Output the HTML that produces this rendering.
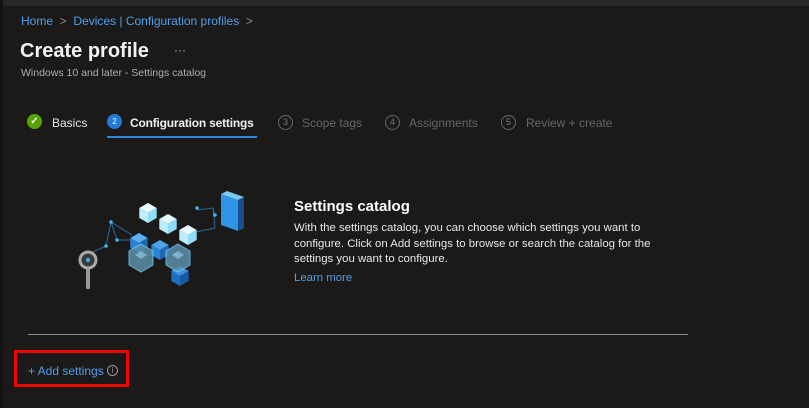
<!DOCTYPE html>
<html><head><meta charset="utf-8"><style>
*{margin:0;padding:0;box-sizing:border-box}
body{width:809px;height:408px;background:#1b1a19;font-family:"Liberation Sans",sans-serif;position:relative;overflow:hidden;color:#fff}
.a{position:absolute;white-space:nowrap}
.blue{color:#4f9fe8}
.step{font-size:12px;color:#666}
.circ{position:absolute;width:15px;height:15px;border-radius:50%;border:1.5px solid #666;font-size:9px;text-align:center;line-height:12px;color:#777}
</style></head><body>
<div class="a" style="left:0;top:0;width:809px;height:6px;background:#292827"></div>
<div class="a" style="left:0;top:0;width:3px;height:408px;background:#141313"></div>
<div class="a" style="left:21px;top:14px;font-size:12px"><span class="blue">Home</span><span style="color:#888">&nbsp;&nbsp;&gt;&nbsp;&nbsp;</span><span class="blue">Devices | Configuration profiles</span><span style="color:#888">&nbsp;&nbsp;&gt;</span></div>
<div class="a" style="left:20px;top:40px;font-size:20px;font-weight:bold;color:#f3f2f1">Create profile</div>
<div class="a" style="left:174px;top:43px;font-size:12px;color:#aaa">···</div>
<div class="a" style="left:21px;top:67px;font-size:10.5px;color:#b0aead">Windows 10 and later - Settings catalog</div>

<div class="a" style="left:27px;top:114px;width:15px;height:15px;border-radius:50%;background:#57a300;color:#fff;font-size:10px;text-align:center;line-height:15px;font-weight:bold">✓</div>
<div class="a" style="left:52px;top:116px;font-size:12px;color:#e6e6e6">Basics</div>
<div class="a" style="left:107px;top:114px;width:15px;height:15px;border-radius:50%;background:#1f7ad6;color:#fff;font-size:8px;text-align:center;line-height:15px">2</div>
<div class="a" style="left:130px;top:116px;font-size:12px;font-weight:bold;color:#f0f0f0;letter-spacing:-0.2px">Configuration settings</div>
<div class="a" style="left:107px;top:136px;width:150px;height:2px;background:#2a88e0"></div>
<div class="circ" style="left:278px;top:115px">3</div>
<div class="a step" style="left:302px;top:116px">Scope tags</div>
<div class="circ" style="left:385px;top:115px">4</div>
<div class="a step" style="left:409px;top:116px">Assignments</div>
<div class="circ" style="left:501px;top:115px">5</div>
<div class="a step" style="left:526px;top:116px">Review + create</div>

<svg class="a" style="left:0;top:0" width="300" height="330" viewBox="0 0 300 330">
<g stroke="#246d9e" stroke-width="1" fill="none">
<polyline points="93,252 106,246 111,222 117,240 137,240"/>
<line x1="111" y1="222" x2="132" y2="235"/>
<polyline points="197,210 213,208 215,228 196,232"/>
<line x1="213" y1="208" x2="215" y2="216"/>
<line x1="180" y1="256" x2="160" y2="248"/>
</g>
<g fill="#3fb8f0"><circle cx="106" cy="246" r="1.8"/><circle cx="111" cy="222" r="1.8"/><circle cx="117" cy="240" r="1.8"/><circle cx="197" cy="208" r="1.8"/><circle cx="215" cy="215" r="1.8"/></g>
<g transform="translate(148,213)"><polygon points="0,-10 8.7,-5 0,0 -8.7,-5" fill="#e6faff"/><polygon points="-8.7,-5 0,0 0,10 -8.7,5" fill="#bdeeff"/><polygon points="8.7,-5 0,0 0,10 8.7,5" fill="#8fdcfb"/></g>
<g transform="translate(168,224)"><polygon points="0,-10 8.7,-5 0,0 -8.7,-5" fill="#e6faff"/><polygon points="-8.7,-5 0,0 0,10 -8.7,5" fill="#bdeeff"/><polygon points="8.7,-5 0,0 0,10 8.7,5" fill="#8fdcfb"/></g>
<g transform="translate(188,235)"><polygon points="0,-10 8.7,-5 0,0 -8.7,-5" fill="#e6faff"/><polygon points="-8.7,-5 0,0 0,10 -8.7,5" fill="#bdeeff"/><polygon points="8.7,-5 0,0 0,10 8.7,5" fill="#8fdcfb"/></g>
<g transform="translate(139,243)"><polygon points="0,-10 8.7,-5 0,0 -8.7,-5" fill="#5ab0f0"/><polygon points="-8.7,-5 0,0 0,10 -8.7,5" fill="#2a82d4"/><polygon points="8.7,-5 0,0 0,10 8.7,5" fill="#1d68b4"/></g>
<g transform="translate(160,250)"><polygon points="0,-10 8.7,-5 0,0 -8.7,-5" fill="#4aa4e8"/><polygon points="-8.7,-5 0,0 0,10 -8.7,5" fill="#2a82d4"/><polygon points="8.7,-5 0,0 0,10 8.7,5" fill="#1d68b4"/></g>
<g transform="translate(141,258)" opacity=".85"><polygon points="0,-14 12,-7 12,7 0,14 -12,7 -12,-7" fill="#5c8fa8" stroke="#6fd0ff"/><polygon points="0,-7 6,-3 0,1 -6,-3" fill="#8ccde8"/></g>
<g transform="translate(180,276)"><polygon points="0,-10 8.7,-5 0,0 -8.7,-5" fill="#3d92e0"/><polygon points="-8.7,-5 0,0 0,10 -8.7,5" fill="#1f6fc2"/><polygon points="8.7,-5 0,0 0,10 8.7,5" fill="#155aa3"/></g>
<g transform="translate(178,258)" opacity=".85"><polygon points="0,-14 12,-7 12,7 0,14 -12,7 -12,-7" fill="#5c8fa8" stroke="#6fd0ff"/><polygon points="0,-7 6,-3 0,1 -6,-3" fill="#8ccde8"/></g>
<polygon points="221,194 238,200 238,231 221,225" fill="#2f93e8"/>
<polygon points="238,200 244,197 244,228 238,231" fill="#15508c"/>
<polygon points="221,194 227,191 244,197 238,200" fill="#7cc8f5"/>
<circle cx="88" cy="260" r="8" fill="#3a3a3a" stroke="#aaa" stroke-width="3"/>
<circle cx="88" cy="260" r="2" fill="#3fb8f0"/>
<rect x="86" y="269" width="4" height="20" rx="1" fill="#9a9a9a"/>
</svg>

<div class="a" style="left:294px;top:198px;font-size:15px;font-weight:bold;color:#fff">Settings catalog</div>
<div class="a" style="left:294px;top:221px;font-size:11.4px;line-height:15.5px;color:#e8e8e8">With the settings catalog, you can choose which settings you want to<br>configure. Click on Add settings to browse or search the catalog for the<br>settings you want to configure.</div>
<div class="a blue" style="left:294px;top:272px;font-size:11.4px">Learn more</div>

<div class="a" style="left:28px;top:334px;width:660px;height:1px;background:#8a8886"></div>
<div class="a" style="left:14px;top:350px;width:115px;height:37px;border:3px solid #e00"></div>
<div class="a blue" style="left:28px;top:364px;font-size:12px">+ Add settings</div>
<div class="a" style="left:107px;top:365px;width:11px;height:11px;border-radius:50%;border:1px solid #999;font-size:8px;color:#999;text-align:center;line-height:9px">i</div>
</body></html>
